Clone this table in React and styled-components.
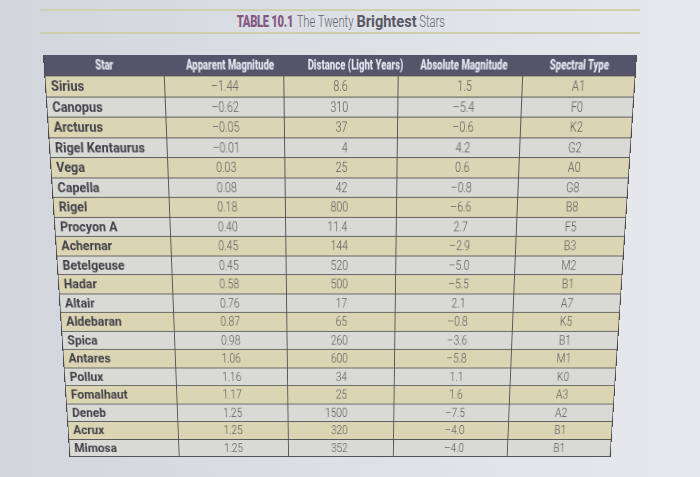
import React from 'react';
import styled, { createGlobalStyle } from 'styled-components';

const GlobalStyle = createGlobalStyle`
  html, body {
    margin: 0;
    padding: 0;
  }
  body {
    width: 700px;
    height: 477px;
    overflow: hidden;
    background: linear-gradient(90deg, #d2d5dc 0%, #dcdfe4 45%, #e4e6ea 85%, #e7e8ec 100%);
    font-family: 'Roboto', 'Liberation Sans', sans-serif;
  }
`;

const Page = styled.div`
  width: 700px;
  height: 477px;
  overflow: hidden;
  display: flex;
  flex-direction: column;
`;

// no condensed face is installed, so squeeze the glyphs horizontally
const Squeeze = styled.span`
  display: inline-block;
  white-space: nowrap;
  transform: scaleX(${(p) => p.$x || 0.78});
  transform-origin: ${(p) => p.$origin || '50% 50%'};
`;

const TitleBand = styled.div`
  flex: none;
  margin: 9px 60px 0 40px;
  height: 21px;
  border-top: 2px solid #cfd0b0;
  border-bottom: 2px solid #cdceab;
  display: flex;
  align-items: center;
  justify-content: center;
  padding-left: 2px;
`;

const TitleText = styled(Squeeze)`
  font-family: 'Roboto', sans-serif;
  font-size: 16px;
  font-weight: 300;
  color: #64646e;
`;

const Label = styled.span`
  font-weight: 900;
  color: #845a83;
  letter-spacing: -0.4px;
  margin-right: 5px;
`;

const Strong = styled.span`
  font-weight: 700;
  color: #5a5866;
  display: inline-block;
  transform: scaleX(1.3);
  margin: 0 14px;
`;

const Stage = styled.div`
  flex: none;
  padding: 21px 0 0 43px;
`;

const Table = styled.div`
  width: 594px;
  border: 1.5px solid #4a4a50;
  border-top: none;
  box-sizing: border-box;
  transform-origin: 50% 0;
  transform: perspective(1000px) rotateX(-12.5deg);
`;

const cols = '119px 120px 115px 125px 1fr';

const HeadRow = styled.div`
  display: grid;
  grid-template-columns: ${cols};
  height: 21px;
  background: #56546b;
  align-items: center;
`;

const HeadCell = styled.div`
  text-align: center;
  font-family: 'Roboto', sans-serif;
  font-weight: 900;
  font-size: 14.5px;
  color: #e6e6f0;
  white-space: nowrap;
`;

const Row = styled.div`
  display: grid;
  grid-template-columns: ${cols};
  height: 21.5px;
  background: ${(p) => (p.$odd ? '#dcd5b4' : '#d9d9d5')};
  border-top: 1.5px solid #55555a;
  box-sizing: border-box;
`;

const Cell = styled.div`
  display: flex;
  align-items: center;
  justify-content: ${(p) => p.$align || 'center'};
  padding: ${(p) => p.$pad || '0'};
  border-left: ${(p) => (p.$first ? 'none' : '1.5px solid #55555a')};
  font-family: 'Roboto', sans-serif;
  font-weight: 300;
  font-size: 14px;
  color: #56565c;
  overflow: hidden;
`;

const Name = styled(Cell)`
  font-weight: 700;
  font-size: 14px;
  color: #3f3f48;
`;

const stars = [
  ['Sirius', '–1.44', '8.6', '1.5', 'A1'],
  ['Canopus', '–0.62', '310', '–5.4', 'F0'],
  ['Arcturus', '–0.05', '37', '–0.6', 'K2'],
  ['Rigel Kentaurus', '–0.01', '4', '4.2', 'G2'],
  ['Vega', '0.03', '25', '0.6', 'A0'],
  ['Capella', '0.08', '42', '–0.8', 'G8'],
  ['Rigel', '0.18', '800', '–6.6', 'B8'],
  ['Procyon A', '0.40', '11.4', '2.7', 'F5'],
  ['Achernar', '0.45', '144', '–2.9', 'B3'],
  ['Betelgeuse', '0.45', '520', '–5.0', 'M2'],
  ['Hadar', '0.58', '500', '–5.5', 'B1'],
  ['Altair', '0.76', '17', '2.1', 'A7'],
  ['Aldebaran', '0.87', '65', '–0.8', 'K5'],
  ['Spica', '0.98', '260', '–3.6', 'B1'],
  ['Antares', '1.06', '600', '–5.8', 'M1'],
  ['Pollux', '1.16', '34', '1.1', 'K0'],
  ['Fomalhaut', '1.17', '25', '1.6', 'A3'],
  ['Deneb', '1.25', '1500', '–7.5', 'A2'],
  ['Acrux', '1.25', '320', '–4.0', 'B1'],
  ['Mimosa', '1.25', '352', '–4.0', 'B1'],
];

const heads = [
  'Star',
  'Apparent Magnitude',
  'Distance (Light Years)',
  'Absolute Magnitude',
  'Spectral Type',
];

export default function App() {
  return (
    <Page>
      <GlobalStyle />
      <TitleBand>
        <TitleText $x={0.7}>
          <Label>TABLE 10.1</Label>
          The Twenty
          <Strong>Brightest</Strong>
          Stars
        </TitleText>
      </TitleBand>
      <Stage>
        <Table>
          <HeadRow>
            {heads.map((h) => (
              <HeadCell key={h}>
                <Squeeze $x={0.66}>{h}</Squeeze>
              </HeadCell>
            ))}
          </HeadRow>
          {stars.map((s, i) => (
            <Row key={s[0]} $odd={i % 2 === 0}>
              <Name $first $align="flex-start" $pad="0 0 0 5px">
                <Squeeze $x={0.92} $origin="0 50%">
                  {s[0]}
                </Squeeze>
              </Name>
              <Cell>
                <Squeeze>{s[1]}</Squeeze>
              </Cell>
              <Cell $align="flex-end" $pad="0 50px 0 0">
                <Squeeze $origin="100% 50%">{s[2]}</Squeeze>
              </Cell>
              <Cell $pad="0 0 0 8px">
                <Squeeze>{s[3]}</Squeeze>
              </Cell>
              <Cell>
                <Squeeze>{s[4]}</Squeeze>
              </Cell>
            </Row>
          ))}
        </Table>
      </Stage>
    </Page>
  );
}
